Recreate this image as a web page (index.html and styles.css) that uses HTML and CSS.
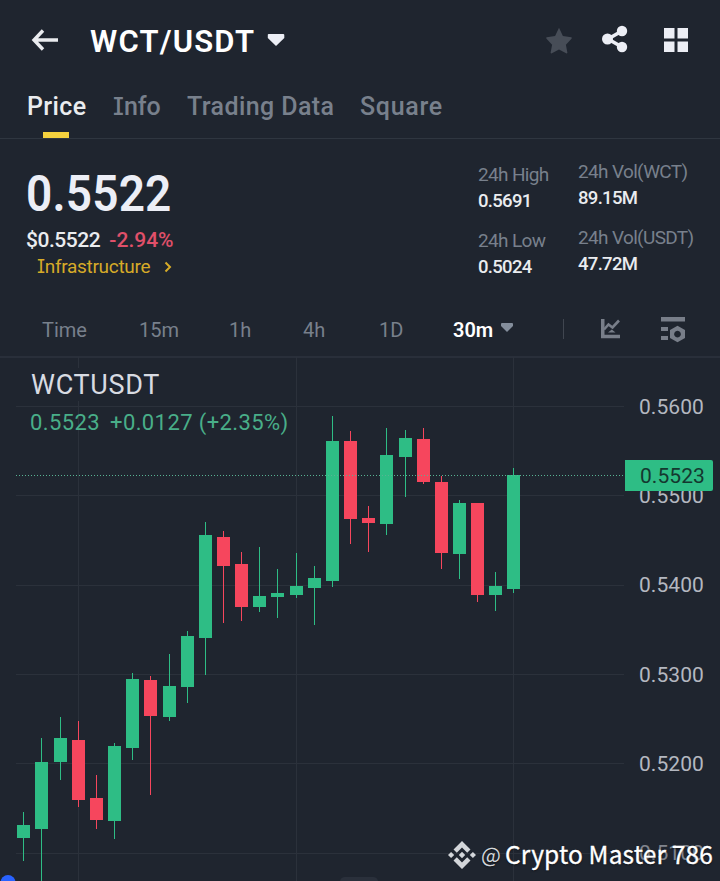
FILE: index.html
```html
<!DOCTYPE html>
<html lang="en">
<head>
<meta charset="utf-8">
<title>WCT/USDT</title>
<link rel="stylesheet" href="styles.css">
</head>
<body>
<div class="app">
  <header class="topbar">
    <svg class="back" width="28" height="22" viewBox="0 0 28 22"><path d="M12 1.500 3 11l9 9.500M3.500 11H27" fill="none" stroke="#eaecef" stroke-width="3.400"/></svg>
    <h1 class="pair">WCT/USDT</h1>
    <svg class="pair-caret" width="18" height="14" viewBox="0 0 18 14"><path d="M1.500 1h15q1 0 .8 1.500V5L9 13 .8 5V2.500Q.5 1 1.500 1Z" fill="#eceef5"/></svg>
    <div class="actions">
      <svg width="28" height="28" viewBox="0 0 28 28"><path d="m14 1.800 3.900 8.300 8.400 1.200q1 .4.200 1.400l-5.600 6 1.500 8q-.3.900-1.300.6L14 23.600l-7.100 3.700q-1 .3-1.300-.6l1.500-8-5.600-6q-.8-1 .2-1.400l8.400-1.200Z" fill="#474d57"/></svg>
      <svg width="28" height="28" viewBox="0 0 28 28"><path d="M21 6 7 14l14 8" fill="none" stroke="#eceef5" stroke-width="3.600"/><g fill="#eceef5"><circle cx="21" cy="6" r="5.200"/><circle cx="6.500" cy="14" r="5.500"/><circle cx="21" cy="22" r="5.200"/></g></svg>
      <svg width="24" height="24" viewBox="0 0 24 24"><path d="M0 0h10.500v10.500H0ZM13.500 0H24v10.500H13.500ZM0 13.500h10.500V24H0ZM13.500 13.500H24V24H13.500Z" fill="#eceef5"/></svg>
    </div>
  </header>

  <nav class="tabs">
    <span class="tab active">Price</span>
    <span class="tab info"><span class="slab">I</span>nfo</span>
    <span class="tab trading">Trading Data</span>
    <span class="tab square">Square</span>
  </nav>

  <section class="summary">
    <div class="quote">
      <div class="last">0.5522</div>
      <div class="fiat"><span>$0.5522</span><span class="down">-2.94%</span></div>
      <div class="sector"><span><span class="slab">I</span>nfrastructure</span><svg width="8" height="12" viewBox="0 0 8 12"><path d="m1.500 1.500 4.500 4.500-4.500 4.500" fill="none" stroke="#d6ab28" stroke-width="2"/></svg></div>
    </div>
    <dl class="stats range">
      <dt>24h High</dt><dd>0.5691</dd>
      <dt class="low">24h Low</dt><dd>0.5024</dd>
    </dl>
    <dl class="stats volume">
      <dt>24h Vol(WCT)</dt><dd>89.15M</dd>
      <dt class="usdt">24h Vol(USDT)</dt><dd>47.72M</dd>
    </dl>
  </section>

  <nav class="intervals">
    <span class="i-time">Time</span><span class="i-15">15m</span><span class="i-1h">1h</span><span class="i-4h">4h</span><span class="i-1d">1D</span><span class="current">30m</span>
    <svg class="caret" width="12" height="10" viewBox="0 0 12 10"><path d="M1 0h10q1 0 1 1v2L6 9 0 3V1q0-1 1-1Z" fill="#848e9c"/></svg>
    <i class="divider"></i>
    <svg class="draw" width="19" height="20" viewBox="0 0 19 20" fill="none" stroke="#787e89"><path d="M1.700 0v17.500H19" stroke-width="3.600"/><path d="m3 10.500 4.500-5 4 3 6.500-7" stroke-width="2.600"/><path d="m7 13.500 3.800-3 3.700 3Z" fill="#787e89" stroke="none"/></svg>
    <svg class="settings" width="26" height="26" viewBox="0 0 26 26"><path d="M1 0h24v4.500H1ZM1 10h7v4H1ZM1 19h7v4H1Z" fill="#787e89"/><path fill-rule="evenodd" d="m17.500 8.800 7.500 4.300v8L17.500 25.300 10 21.100v-8ZM17.500 13.700a3.400 3.400 0 1 0 .01 0Z" fill="#787e89"/></svg>
  </nav>

  <main class="chart">
    <svg class="plot" width="720" height="524" viewBox="0 357 720 524">
      <path class="grid" d="M16 406.500H624M16 495.500H624M16 585.500H624M16 674.500H624M16 763.500H624M16 853.500H624M78.500 357V881M296.500 357V881M513.500 357V881"/>
      <rect x="29" y="368" width="136" height="33" fill="#1f252f"/>
      <g class="up">
        <path d="M23 812h1v49h-1ZM41 738h1v143h-1ZM60 717h1v63h-1ZM114 743h1v96h-1ZM132 673h1v87h-1ZM169 654h1v67h-1ZM187 631h1v72h-1ZM205 522h1v153h-1ZM259 547h1v65h-1ZM277 569h1v49h-1ZM296 553h1v45h-1ZM314 566h1v59h-1ZM332 416h1v171h-1ZM386 428h1v107h-1ZM405 430h1v67h-1ZM459 500h1v79h-1ZM495 572h1v39h-1ZM513 468h1v125h-1Z"/>
        <path d="M17 825h13v13H17ZM35 762h13v67H35ZM54 738h13v24H54ZM108 746h13v75H108ZM126 679h13v69H126ZM163 686h13v31H163ZM181 636h13v51H181ZM199 535h13v103H199ZM253 596h13v11H253ZM271 593h13v4H271ZM290 586h13v9H290ZM308 578h13v10H308ZM326 441h13v140H326ZM380 455h13v69H380ZM399 438h13v19H399ZM453 503h13v51H453ZM489 586h13v9H489ZM507 475h13v114H507Z"/>
      </g>
      <g class="dn">
        <path d="M78 721h1v86h-1ZM96 775h1v54h-1ZM150 676h1v119h-1ZM223 531h1v92h-1ZM241 552h1v69h-1ZM350 431h1v113h-1ZM368 506h1v46h-1ZM423 428h1v56h-1ZM441 476h1v93h-1ZM477 503h1v99h-1Z"/>
        <path d="M72 740h13v60H72ZM90 798h13v22H90ZM144 680h13v36H144ZM217 537h13v29H217ZM235 564h13v43H235ZM344 441h13v78H344ZM362 518h13v5H362ZM417 439h13v43H417ZM435 482h13v71H435ZM471 503h13v92H471Z"/>
      </g>
      <path d="M16 475.500H625" stroke="#58b393" stroke-width="1" stroke-dasharray="1 2"/>
      <g class="axis">
        <text x="639" y="414">0.5600</text>
        <text x="639" y="503">0.5500</text>
        <text x="639" y="592">0.5400</text>
        <text x="639" y="682">0.5300</text>
        <text x="639" y="771">0.5200</text>
        <text class="dim" x="639" y="860">0.5100</text>
      </g>
      <path d="M625 460h86q2 0 2 2v27q0 2-2 2h-86Z" fill="#2ebd85"/>
      <text class="tag" x="640" y="483">0.5523</text>
      <text class="symbol" x="31" y="394">WCTUSDT</text>
      <text class="change" x="30" y="430">0.5523</text>
      <text class="change" x="110" y="430">+0.0127 (+2.35%)</text>
      <circle cx="8" cy="882.500" r="7.500" fill="#2962ff"/>
      <path d="M340 881q1-4 5-4h28q4 0 5 4Z" fill="#2a303b"/>
    </svg>
    <div class="watermark">
      <svg width="28" height="28" viewBox="0 0 28 28" fill="#d3d6da"><path d="m14 0 8.500 8.500-3.300 3.300L14 6.600l-5.200 5.200-3.300-3.300ZM14 28l8.500-8.500-3.300-3.300L14 21.400l-5.200-5.200-3.300 3.300ZM14 10.800l3.200 3.200-3.200 3.200-3.200-3.200ZM3.100 10.900 6.200 14l-3.100 3.100L0 14ZM24.900 10.900 28 14l-3.100 3.100-3.100-3.100Z"/></svg>
      <span class="at">@</span><span class="author">Crypto Master 786</span>
    </div>
  </main>
</div>
</body>
</html>
```
FILE: styles.css
```css
* { box-sizing: border-box; }
body { margin: 0; background: #1f252f; color: #eaecef; font-family: Roboto, "Liberation Sans", sans-serif; }
.app { width: 720px; height: 881px; overflow: hidden; display: flex; flex-direction: column; }
svg { display: block; flex: none; }
.slab { font-family: Inter, sans-serif; font-feature-settings: "cv08"; font-size: .96em; line-height: 0; }

.topbar { height: 80px; padding: 0 31px; display: flex; align-items: center; }
.back { margin-right: 31px; }
.pair { margin: 3px 0 0; width: 164px; font-size: 31px; line-height: 40px; font-weight: 600; letter-spacing: 1.200px; color: #fff; white-space: nowrap; }
.pair-caret { margin-left: 13px; }
.actions { margin-left: auto; margin-right: 1px; display: flex; align-items: center; }
.actions svg:nth-child(2) { margin: -2px 35px 0 28px; }
.actions svg:nth-child(3) { margin-top: -1px; }

.tabs { height: 59px; padding: 12px 27px 0; display: flex; border-bottom: 1px solid #2f3640; font-size: 25px; line-height: 30px; font-weight: 500; color: #78808c; }
.tab { white-space: nowrap; letter-spacing: .4px; }
.active { width: 86px; color: #eaecef; }
.active::after { content: ""; display: block; width: 26px; height: 6px; margin: 10px 0 0 16px; background: #f5d13e; }
.info { width: 74px; letter-spacing: 0; }
.trading { width: 173px; }
.square { letter-spacing: .7px; }

.summary { height: 164px; display: grid; grid-template-columns: 451px 100px 1fr; padding-left: 27px; }
.last { margin: 29px 0 0 -1px; font-size: 50px; line-height: 52px; font-weight: 600; letter-spacing: .2px; color: #eceef6; transform: scaleX(.92); transform-origin: left; }
.fiat { display: flex; gap: 9px; margin: 7px 0 0 -1px; font-size: 21px; line-height: 26px; font-weight: 500; letter-spacing: -.45px; }
.down { color: #e0506a; letter-spacing: 0; }
.sector { display: flex; align-items: center; gap: 14px; margin: 1px 0 0 10px; font-size: 19px; line-height: 26px; letter-spacing: -.3px; color: #d6ab28; }
.stats { margin: 0; font-size: 19px; line-height: 26px; white-space: nowrap; }
.range { padding-top: 23px; }
.volume { padding-top: 20px; }
.stats dt { color: #78808c; letter-spacing: -.65px; }
.stats dd { margin: 0 0 14px; font-size: 18.500px; font-weight: 500; letter-spacing: -.7px; }

.intervals { height: 55px; padding: 0 0 0 42px; display: flex; align-items: center; border-bottom: 2px solid #292f3a; margin-bottom: -1px; font-size: 20px; color: #78808c; }
.i-time { width: 97px; }
.i-15 { width: 90px; }
.i-1h { width: 74px; }
.i-4h { width: 76px; }
.i-1d { width: 74px; }
.current { width: 48px; color: #fff; font-weight: 600; }
.caret { margin-top: -3px; }
.divider { width: 1px; height: 20px; margin: -2px 37px 0 50px; background: #404650; }
.draw { margin-top: -2px; }
.settings { margin: 0 0 0 40px; }

.chart { position: relative; height: 524px; }
.grid { fill: none; stroke: #2b313b; stroke-width: 1; }
.up { fill: #2ebd85; }
.dn { fill: #f6465d; }
.axis text, .tag { font-size: 21px; letter-spacing: .05px; fill: #b4b8c0; }
.axis .dim { opacity: .65; }
.tag { fill: #14382f; }
.symbol { font-size: 27px; letter-spacing: .7px; fill: #d8dbe2; }
.change { font-size: 22px; letter-spacing: .4px; fill: #49ae89; }
.watermark { position: absolute; left: 448px; top: 480px; height: 36px; display: flex; align-items: center; font-family: "Noto Sans CJK SC", sans-serif; font-weight: 400; line-height: 36px; white-space: nowrap; text-shadow: 0 1px 2px #0008; }
.at { width: 24px; margin: -3px 0 0 5px; font-size: 21px; color: #d3d6da; }
.author { margin-top: -2px; font-size: 24.500px; letter-spacing: .15px; color: #fff; -webkit-text-stroke: .3px #fff; }
```
